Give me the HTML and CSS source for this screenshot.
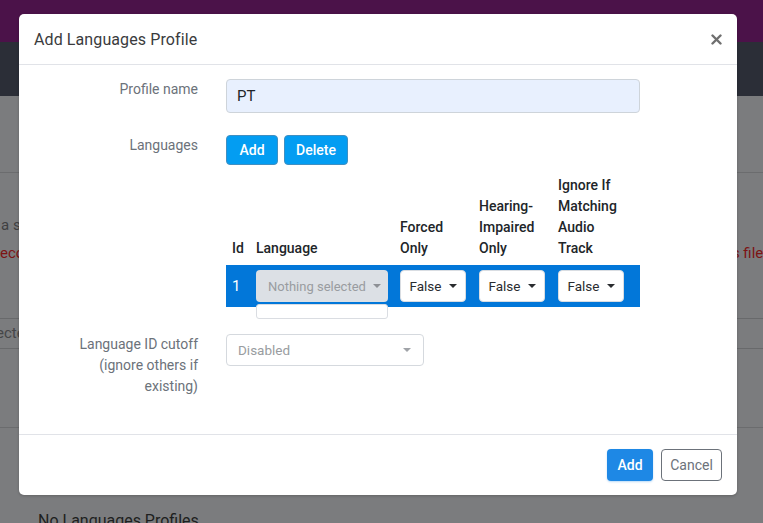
FILE: index.html
```html
<!DOCTYPE html>
<html lang="en">
<head>
<meta charset="utf-8">
<title>Add Languages Profile</title>
<link rel="stylesheet" href="styles.css">
</head>
<body>
<div class="page">
  <div class="topbar"></div>
  <div class="toolbar"></div>
  <div class="sec1"></div>
  <div class="sec2">
    <p class="muted-line">a subtitle language is selected per profile</p>
    <div class="warn-line"><span>ecommended to create</span><span class="warn-right">s files</span></div>
    <div class="fake-select">ected</div>
  </div>
  <div class="sec3"><p class="empty">No Languages Profiles</p></div>
</div>

<div class="modal">
  <div class="modal-header">
    <h5 class="modal-title">Add Languages Profile</h5>
    <svg class="close-icon" width="11" height="11" viewBox="0 0 11 11"><path d="M1.5 1.5 L9.5 9.5 M9.5 1.5 L1.5 9.5" stroke="#6f6f6f" stroke-width="2.4" stroke-linecap="round"/></svg>
  </div>
  <div class="modal-body">
    <div class="form-row">
      <div class="label">Profile name</div>
      <div class="text-input">PT</div>
    </div>
    <div class="form-row row-languages">
      <div class="label">Languages</div>
      <div class="field">
        <div class="btn-row">
          <button class="btn-info btn-add">Add</button>
          <button class="btn-info btn-del">Delete</button>
        </div>
        <table class="lang-table">
          <thead>
            <tr>
              <th class="c-id">Id</th>
              <th class="c-lang">Language</th>
              <th class="c-flag"><span class="hd">Forced Only</span></th>
              <th class="c-flag"><span class="hd">Hearing-Impaired Only</span></th>
              <th class="c-last"><span class="hd hd-narrow">Ignore If Matching Audio Track</span></th>
            </tr>
          </thead>
          <tbody>
            <tr class="active-row">
              <td class="c-id">1</td>
              <td class="c-lang">
                <div class="picker">
                  <div class="picker-btn">Nothing selected<span class="caret caret-grey"></span></div>
                  <div class="picker-menu"></div>
                </div>
              </td>
              <td><div class="bool-btn">False<span class="caret"></span></div></td>
              <td><div class="bool-btn">False<span class="caret"></span></div></td>
              <td><div class="bool-btn">False<span class="caret"></span></div></td>
            </tr>
          </tbody>
        </table>
      </div>
    </div>
    <div class="form-row">
      <div class="label label-wrap">Language ID cutoff (ignore others if existing)</div>
      <div class="select-box">Disabled<span class="caret caret-light"></span></div>
    </div>
  </div>
  <div class="modal-footer">
    <button class="btn-primary">Add</button>
    <button class="btn-outline">Cancel</button>
  </div>
</div>
</body>
</html>
```

FILE: styles.css
```css
* { box-sizing: border-box; }
html, body { margin: 0; padding: 0; }
body {
  width: 763px;
  height: 523px;
  overflow: hidden;
  font-family: Roboto, "Liberation Sans", sans-serif;
  font-size: 14px;
  background: #7b7c7e;
  position: relative;
}

/* dimmed background page */
.page { width: 763px; overflow: hidden; }
.topbar { height: 42px; background: #4b1249; }
.toolbar { height: 54px; background: #2b2e37; }
.sec1 { height: 77px; border-bottom: 1px solid #6b6c6e; }
.sec2 { padding-top: 42px; border-bottom: 1px solid #6b6c6e; padding-bottom: 78px; }
.muted-line { margin: 0; padding-left: 1px; line-height: 21px; color: #3f4042; font-size: 15px; white-space: nowrap; }
.warn-line {
  display: flex; justify-content: space-between;
  margin-top: 7px; line-height: 21px; color: #7d1414; font-size: 15px;
  white-space: nowrap;
}
.warn-right { margin-right: -8px; }
.fake-select {
  margin-top: 54px;
  height: 31px;
  border-top: 1px solid #68696b;
  border-bottom: 1px solid #68696b;
  line-height: 29px;
  color: #454648;
  font-size: 15px;
  text-indent: -4px;
}
.sec3 { padding-top: 82px; }
.empty { margin: 0; padding-left: 38px; color: #1e1f20; font-size: 16px; line-height: 21px; }

/* modal */
.modal {
  position: absolute;
  left: 19px;
  top: 14px;
  width: 718px;
  background: #fff;
  border-radius: 5px;
  box-shadow: 0 1px 3px rgba(0,0,0,0.2);
}
.modal-header {
  height: 51px;
  display: flex;
  align-items: center;
  justify-content: space-between;
  padding: 0 15px;
  border-bottom: 1px solid #e1e3e8;
}
.modal-title {
  margin: 0;
  font-size: 16px;
  font-weight: 400;
  color: #3a3b3d;
  letter-spacing: 0.1px;
}
.close-icon { display: block; }

.modal-body { padding: 14px 16px 15px; }
.form-row { display: flex; align-items: flex-start; margin-bottom: 22px; }
.row-languages { margin-bottom: 27px; }
.label {
  width: 163px;
  margin-right: 28px;
  text-align: right;
  color: #6c727a;
  line-height: 21px;
  font-size: 14px;
  flex: none;
}
.label-wrap { padding-left: 40px; }
.text-input {
  width: 414px;
  height: 34px;
  background: #e8f0fe;
  border: 1px solid #ced4da;
  border-radius: 4px;
  padding-left: 10px;
  line-height: 32px;
  font-size: 15px;
  color: #212529;
}
.field { width: 414px; }
.btn-row { display: flex; gap: 6px; }
.btn-info {
  height: 30px;
  padding: 0;
  background: #039df2;
  color: #fff;
  border: 1px solid #3f8fc2;
  border-radius: 4px;
  font-family: inherit;
  font-size: 14px;
  font-weight: 500;
}
.btn-add { width: 52px; }
.btn-del { width: 64px; }

.lang-table {
  margin-top: 4px;
  width: 414px;
  border-collapse: collapse;
  border-spacing: 0;
  table-layout: fixed;
  color: #212529;
}
.lang-table th {
  text-align: left;
  vertical-align: bottom;
  font-weight: 500;
  line-height: 21px;
  padding: 6px 6px;
  font-size: 14px;
}
.c-id { width: 24px; }
.c-lang { width: 144px; }
.c-flag { width: 79px; }
.c-last { width: 88px; }
.hd { display: block; }
.hd-narrow { max-width: 64px; }
.lang-table td { padding: 5px 6px; vertical-align: middle; }
.active-row { background: #0277d9; }
.active-row td.c-id { color: #fff; font-size: 15px; }

.picker { position: relative; width: 132px; }
.picker-btn {
  height: 32px;
  background: #dce0e5;
  border-radius: 4px;
  color: #999ca0;
  padding-left: 12px;
  font-size: 13px;
  white-space: nowrap;
  display: flex;
  align-items: center;
}
.picker-menu {
  position: absolute;
  left: 0;
  top: 34px;
  width: 132px;
  height: 15px;
  background: #fff;
  border: 1px solid #dadde2;
  border-radius: 3px;
}
.bool-btn {
  height: 32px;
  width: 66px;
  background: #fff;
  border: 1px solid #d9dde2;
  border-radius: 4px;
  display: flex;
  align-items: center;
  justify-content: center;
  color: #2a2c2f;
  font-size: 13.5px;
}
.caret {
  display: inline-block;
  width: 0; height: 0;
  border-left: 4px solid transparent;
  border-right: 4px solid transparent;
  border-top: 4px solid #2a2c2f;
  margin-left: 7px;
}
.caret-grey { border-top-color: #8d9095; margin-left: 7px; }
.caret-light { border-top-color: #a0a3a8; margin-left: auto; }

.select-box {
  width: 198px;
  height: 32px;
  border: 1px solid #d5d9de;
  border-radius: 4px;
  padding: 0 12px 0 11px;
  display: flex;
  align-items: center;
  color: #999ca0;
  font-size: 13.5px;
}

.modal-footer {
  border-top: 1px solid #e1e3e8;
  padding: 14px 15px;
  display: flex;
  justify-content: flex-end;
  gap: 8px;
}
.btn-primary {
  height: 32px;
  width: 46px;
  background: #1e88e5;
  color: #fff;
  border: none;
  border-radius: 4px;
  font-family: inherit;
  font-size: 14px;
  font-weight: 500;
  padding: 0;
  box-shadow: 0 1px 2px rgba(30,136,229,0.3);
}
.btn-outline {
  height: 32px;
  width: 61px;
  background: #fff;
  color: #6c727a;
  border: 1px solid #6c727a;
  border-radius: 4px;
  font-family: inherit;
  font-size: 14px;
  padding: 0;
}
```
